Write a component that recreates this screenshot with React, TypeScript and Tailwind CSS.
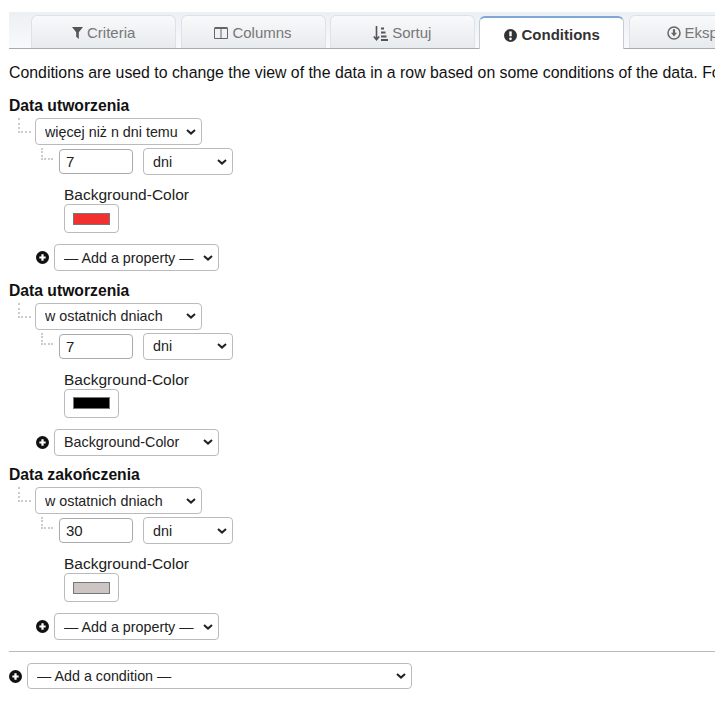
const font = "font-['Liberation_Sans',Arial,sans-serif]"

function Sel({ value, className }: { value: string; className: string }) {
  return (
    <div className={"relative shrink-0 " + className}>
      <select
        defaultValue={value}
        className={"h-full w-full appearance-none rounded-[4px] border border-[#bbb] bg-white pt-[2px] pl-[9px] text-[14.3px] text-[#222] " + font}
      >
        <option>{value}</option>
      </select>
      <svg viewBox="0 0 10 6" className="pointer-events-none absolute top-1/2 right-[6px] h-[6px] w-[10px] -translate-y-1/2" fill="none" stroke="#222" strokeWidth="2">
        <path d="M1 1l4 3.6L9 1" />
      </svg>
    </div>
  )
}

function Tab({ icon, label, active }: { icon: React.ReactNode; label: string; active?: boolean }) {
  return (
    <div
      className={
        "flex h-[33px] w-[145px] shrink-0 items-center justify-center rounded-t-[6px] border border-b-0 " +
        (active
          ? "relative z-10 -mb-px gap-[5px] border-x-[#c5ccd3] border-t-2 border-t-[#7fa8d9] bg-white pt-[4px] font-bold text-[#333]"
          : "gap-[4px] border-[#dde2e7] bg-gradient-to-b from-[#f8f9fb] to-[#e8ebee] pt-[2px] text-[#777]")
      }
    >
      {icon}
      <span>{label}</span>
    </div>
  )
}

function PlusIcon() {
  return (
    <svg viewBox="0 0 14 14" className="size-[13px] shrink-0">
      <circle cx="7" cy="7" r="7" fill="#111" />
      <path d="M7 3.6v6.8M3.6 7h6.8" stroke="#fff" strokeWidth="2.4" />
    </svg>
  )
}

function TreeLine({ className }: { className: string }) {
  return <div className={"shrink-0 border-b-2 border-l-2 border-dotted border-[#ccc] " + className} />
}

function Condition(props: { title: string; op: string; value: string; color: string; add: string }) {
  return (
    <div className="flex flex-col">
      <div className="h-[18px] text-[15.7px] leading-[20px] font-bold text-[#111]">{props.title}</div>
      <div className="mt-[4px] flex items-start pl-[9px]">
        <TreeLine className="h-[15px] w-[13px]" />
        <Sel value={props.op} className="ml-[4px] h-[27px] w-[167px]" />
      </div>
      <div className="mt-[3px] flex items-center pl-[32px]">
        <TreeLine className="mb-[4px] h-[12px] w-[12px] self-start" />
        <input
          readOnly
          value={props.value}
          className={"ml-[6px] h-[25px] w-[74px] rounded-[4px] border border-[#aaa] bg-white pl-[6px] text-[15px] text-[#222] " + font}
        />
        <Sel value="dni" className="ml-[10px] h-[27px] w-[90px]" />
      </div>
      <div className="mt-[11px] pl-[55px] text-[15.5px] leading-[18px] text-[#222]">Background-Color</div>
      <div className="pl-[55px]">
        <div className="flex h-[29px] w-[55px] items-center justify-center rounded-[4px] border border-[#bbb]">
          <div className="h-[12px] w-[37px] border border-[#777]" style={{ backgroundColor: props.color }} />
        </div>
      </div>
      <div className="mt-[11px] flex items-center gap-[5px] pl-[27px]">
        <PlusIcon />
        <Sel value={props.add} className="h-[27px] w-[165px]" />
      </div>
    </div>
  )
}

export default function App() {
  return (
    <div className={"h-[717px] w-[715px] overflow-hidden bg-white pt-[12px] pl-[9px] " + font}>
      <div className="flex h-[37px] w-[706px] items-end gap-[4.33px] border-b border-[#aaa] bg-gradient-to-b from-[#ecf0f4] to-[#f8f9fb] pl-[22.2px] text-[15px]">
        <Tab
          icon={
            <svg viewBox="0 0 11 12" className="h-[12px] w-[11px]" fill="#555">
              <path d="M0 0h11L6.8 5.2V12L4.2 9.8V5.2z" />
            </svg>
          }
          label="Criteria"
        />
        <Tab
          icon={
            <svg viewBox="0 0 14 12" className="h-[12px] w-[14px]" fill="none" stroke="#666">
              <path d="M.5 1.5h13v10H.5zM7 1.5v10" />
              <path d="M.5 1h13" strokeWidth="2" />
            </svg>
          }
          label="Columns"
        />
        <Tab
          icon={
            <svg viewBox="0 0 15 15" className="h-[15px] w-[15px]" fill="none" stroke="#555" strokeWidth="1.6">
              <path d="M3.5 0v13.5M.8 10.5l2.7 3.2 2.7-3.2" />
              <path d="M8 2.5h3M8 6.5h4.5M8 10.5h5.5M8 14h7" strokeWidth="1.8" />
            </svg>
          }
          label="Sortuj"
        />
        <Tab
          active
          icon={
            <svg viewBox="0 0 14 14" className="size-[13px]">
              <circle cx="7" cy="7" r="7" fill="#333" />
              <path d="M7 2.6v5.2" stroke="#fff" strokeWidth="2.6" />
              <circle cx="7" cy="10.6" r="1.4" fill="#fff" />
            </svg>
          }
          label="Conditions"
        />
        <Tab
          icon={
            <svg viewBox="0 0 14 14" className="size-[14px]" fill="none">
              <circle cx="7" cy="7" r="6" stroke="#666" strokeWidth="1.5" />
              <path d="M7 3.2v4.5" stroke="#666" strokeWidth="2.2" />
              <path d="M4 6.8h6L7 10.6z" fill="#666" />
            </svg>
          }
          label="Eksport"
        />
      </div>
      <p className="mt-[15px] h-[18px] text-[15.85px] leading-[18px] whitespace-nowrap text-[#111]">
        Conditions are used to change the view of the data in a row based on some conditions of the data. For
      </p>
      <div className="mt-[14px] flex flex-col gap-[9.5px]">
        <Condition title="Data utworzenia" op="więcej niż n dni temu" value="7" color="#f23030" add="— Add a property —" />
        <Condition title="Data utworzenia" op="w ostatnich dniach" value="7" color="#000000" add="Background-Color" />
        <Condition title="Data zakończenia" op="w ostatnich dniach" value="30" color="#cdc4c4" add="— Add a property —" />
      </div>
      <div className="mt-[11px] h-px bg-[#bbb]" />
      <div className="mt-[11px] flex items-center gap-[5px]">
        <PlusIcon />
        <Sel value="— Add a condition —" className="h-[26px] w-[385px]" />
      </div>
    </div>
  )
}
